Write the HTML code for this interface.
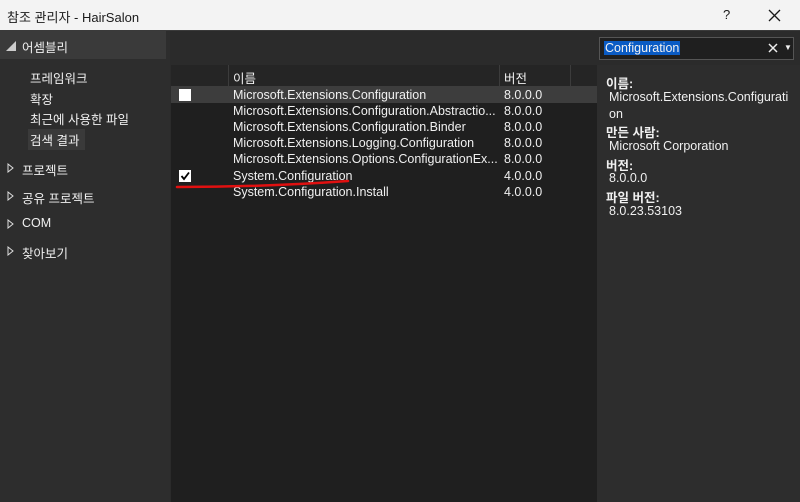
<!DOCTYPE html>
<html><head><meta charset="utf-8"><style>
*{margin:0;padding:0;box-sizing:border-box}
body{width:800px;height:502px;overflow:hidden;background:#2b2b2b;font-family:"Liberation Sans","Noto Sans CJK KR",sans-serif;font-size:12.5px;color:#f0f0f0;position:relative}
.a{position:absolute;white-space:nowrap}
</style></head><body>
<div class="a" style="left:0;top:0;width:800px;height:31px;background:#f3f3f3;border-bottom:1px solid #3a3a3a"></div>
<div class="a" style="left:7px;top:7px;color:#1a1a1a;font-size:13px">참조 관리자 - HairSalon</div>
<div class="a" style="left:723px;top:7px;color:#1a1a1a;font-size:13px">?</div>
<svg class="a" style="left:768px;top:9px" width="13" height="13"><path d="M1 1L12 12M12 1L1 12" stroke="#1a1a1a" stroke-width="1.3"/></svg>

<div class="a" style="left:0;top:31px;width:170px;height:471px;background:#2d2d2d"></div>
<div class="a" style="left:0;top:31px;width:166px;height:28px;background:#3a3a3a"></div>
<div class="a" style="left:6px;top:38px;font-size:10px;color:#ccc">◢</div>
<div class="a" style="left:22px;top:37px">어셈블리</div>
<div class="a" style="left:30px;top:68px">프레임워크</div>
<div class="a" style="left:30px;top:89px">확장</div>
<div class="a" style="left:30px;top:109px">최근에 사용한 파일</div>
<div class="a" style="left:28px;top:129px;width:57px;height:21px;background:#3a3a3a"></div>
<div class="a" style="left:30px;top:130px">검색 결과</div>
<svg class="a" style="left:7px;top:163px" width="8" height="10"><path d="M1 1L6 5L1 9Z" stroke="#ddd" fill="none"/></svg>
<div class="a" style="left:22px;top:160px">프로젝트</div>
<svg class="a" style="left:7px;top:191px" width="8" height="10"><path d="M1 1L6 5L1 9Z" stroke="#ddd" fill="none"/></svg>
<div class="a" style="left:22px;top:188px">공유 프로젝트</div>
<svg class="a" style="left:7px;top:219px" width="8" height="10"><path d="M1 1L6 5L1 9Z" stroke="#ddd" fill="none"/></svg>
<div class="a" style="left:22px;top:216px">COM</div>
<svg class="a" style="left:7px;top:246px" width="8" height="10"><path d="M1 1L6 5L1 9Z" stroke="#ddd" fill="none"/></svg>
<div class="a" style="left:22px;top:243px">찾아보기</div>

<div class="a" style="left:171px;top:65px;width:426px;height:437px;background:#1f1f1f"></div>
<div class="a" style="left:171px;top:65px;width:426px;height:21px;background:#252525"></div>
<div class="a" style="left:228px;top:65px;width:1px;height:21px;background:#3c3c3c"></div>
<div class="a" style="left:499px;top:65px;width:1px;height:21px;background:#3c3c3c"></div>
<div class="a" style="left:570px;top:65px;width:1px;height:21px;background:#3c3c3c"></div>
<div class="a" style="left:233px;top:68px">이름</div>
<div class="a" style="left:504px;top:68px">버전</div>
<div class="a" style="left:171px;top:86px;width:426px;height:17px;background:#3d3d3d"></div>
<div class="a" style="left:179px;top:89px;width:12px;height:12px;background:#fff"></div>
<div class="a" style="left:179px;top:170px;width:12px;height:12px;background:#fff"></div>
<svg class="a" style="left:179px;top:170px" width="12" height="12"><path d="M2.5 6L5 9L10 2.5" stroke="#000" stroke-width="1.8" fill="none"/></svg>
<div class="a" style="left:233px;top:88px">Microsoft.Extensions.Configuration</div>
<div class="a" style="left:233px;top:104px">Microsoft.Extensions.Configuration.Abstractio...</div>
<div class="a" style="left:233px;top:120px">Microsoft.Extensions.Configuration.Binder</div>
<div class="a" style="left:233px;top:136px">Microsoft.Extensions.Logging.Configuration</div>
<div class="a" style="left:233px;top:152px">Microsoft.Extensions.Options.ConfigurationEx...</div>
<div class="a" style="left:233px;top:169px">System.Configuration</div>
<div class="a" style="left:233px;top:185px">System.Configuration.Install</div>
<div class="a" style="left:504px;top:88px">8.0.0.0</div>
<div class="a" style="left:504px;top:104px">8.0.0.0</div>
<div class="a" style="left:504px;top:120px">8.0.0.0</div>
<div class="a" style="left:504px;top:136px">8.0.0.0</div>
<div class="a" style="left:504px;top:152px">8.0.0.0</div>
<div class="a" style="left:504px;top:169px">4.0.0.0</div>
<div class="a" style="left:504px;top:185px">4.0.0.0</div>
<svg class="a" style="left:175px;top:178px" width="180" height="14"><path d="M2 9 Q90 9 173 3" stroke="#e01010" stroke-width="2.5" fill="none" stroke-linecap="round"/></svg>

<div class="a" style="left:597px;top:65px;width:203px;height:437px;background:#2d2d2d"></div>
<div class="a" style="left:599px;top:37px;width:195px;height:23px;background:#1f1f1f;border:1px solid #555"></div>
<div class="a" style="left:604px;top:41px;background:#0a5bc4;padding:0 1px">Configuration</div>
<svg class="a" style="left:768px;top:43px" width="10" height="10"><path d="M1 1L9 9M9 1L1 9" stroke="#eee" stroke-width="1.5"/></svg>
<div class="a" style="left:784px;top:43px;font-size:8px">▼</div>
<div class="a" style="left:606px;top:73px;font-weight:bold">이름:</div>
<div class="a" style="left:609px;top:90px">Microsoft.Extensions.Configurati</div>
<div class="a" style="left:609px;top:107px">on</div>
<div class="a" style="left:606px;top:122px;font-weight:bold">만든 사람:</div>
<div class="a" style="left:609px;top:139px">Microsoft Corporation</div>
<div class="a" style="left:606px;top:155px;font-weight:bold">버전:</div>
<div class="a" style="left:609px;top:171px">8.0.0.0</div>
<div class="a" style="left:606px;top:187px;font-weight:bold">파일 버전:</div>
<div class="a" style="left:609px;top:204px">8.0.23.53103</div>
</body></html>
